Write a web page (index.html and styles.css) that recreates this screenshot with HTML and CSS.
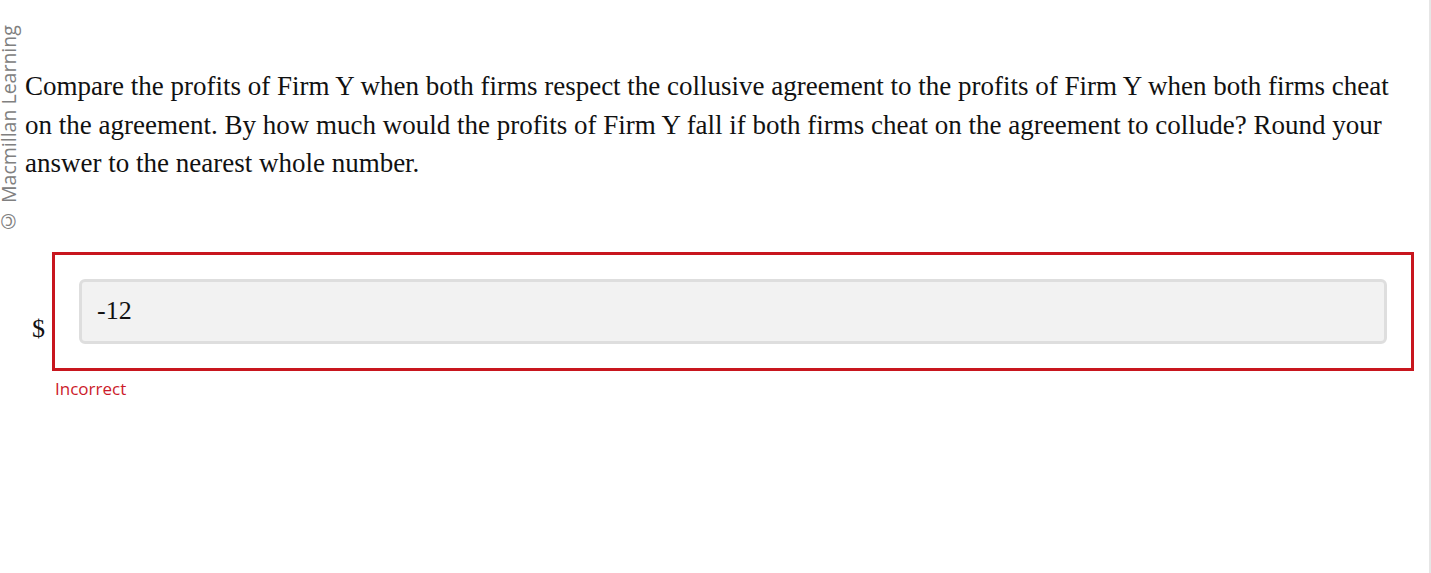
FILE: index.html
```html
<!DOCTYPE html>
<html lang="en">
<head>
<meta charset="utf-8">
<title>Question</title>
<link rel="stylesheet" href="styles.css">
</head>
<body>
<div class="page">
  <div class="watermark"><span>© Macmillan Learning</span></div>
  <div class="content">
    <p class="question">Compare the profits of Firm Y when both firms respect the collusive agreement to the profits of Firm Y when both firms cheat on the agreement. By how much would the profits of Firm Y fall if both firms cheat on the agreement to collude? Round your answer to the nearest whole number.</p>
    <div class="answer-row">
      <span class="currency">$</span>
      <div class="answer-col">
        <div class="answer-box">
          <div class="answer-input">-12</div>
        </div>
        <div class="feedback">Incorrect</div>
      </div>
    </div>
  </div>
</div>
</body>
</html>
```

FILE: styles.css
```css
html, body {
  margin: 0;
  padding: 0;
  background: #ffffff;
}
.page {
  display: flex;
  width: 1429px;
  height: 573px;
  border-right: 2px solid #e6e6e6;
  box-sizing: content-box;
}
.watermark {
  width: 25px;
  flex: none;
  display: flex;
  justify-content: flex-start;
  padding-top: 29px;
}
.watermark span {
  writing-mode: vertical-rl;
  transform: rotate(180deg);
  font-family: "Open Sans", sans-serif;
  font-size: 19.5px;
  color: #808080;
  line-height: 18px;
  height: 206px;
  white-space: nowrap;
}
.content {
  flex: 1;
  padding-right: 15px;
}
.question {
  margin: 67px 0 0 0;
  font-family: "Liberation Serif", "Times New Roman", serif;
  font-size: 27px;
  line-height: 38.5px;
  color: #111;
}
.answer-row {
  display: flex;
  align-items: flex-start;
  margin-top: 69px;
  margin-left: 7px;
}
.currency {
  font-family: "Liberation Serif", serif;
  font-size: 26px;
  color: #111;
  width: 20px;
  margin-top: 62px;
}
.answer-col {
  flex: 1;
}
.answer-box {
  border: 3px solid #c8161e;
  padding: 24px;
}
.answer-input {
  height: 59px;
  box-sizing: content-box;
  border: 3px solid #dedede;
  border-radius: 6px;
  background: #f2f2f2;
  padding: 0 15px;
  font-family: "Liberation Serif", serif;
  font-size: 26px;
  line-height: 57px;
  color: #111;
}
.feedback {
  margin-top: 6px;
  margin-left: 3px;
  font-family: "Open Sans", sans-serif;
  font-size: 17px;
  color: #cc1a2a;
}
```
